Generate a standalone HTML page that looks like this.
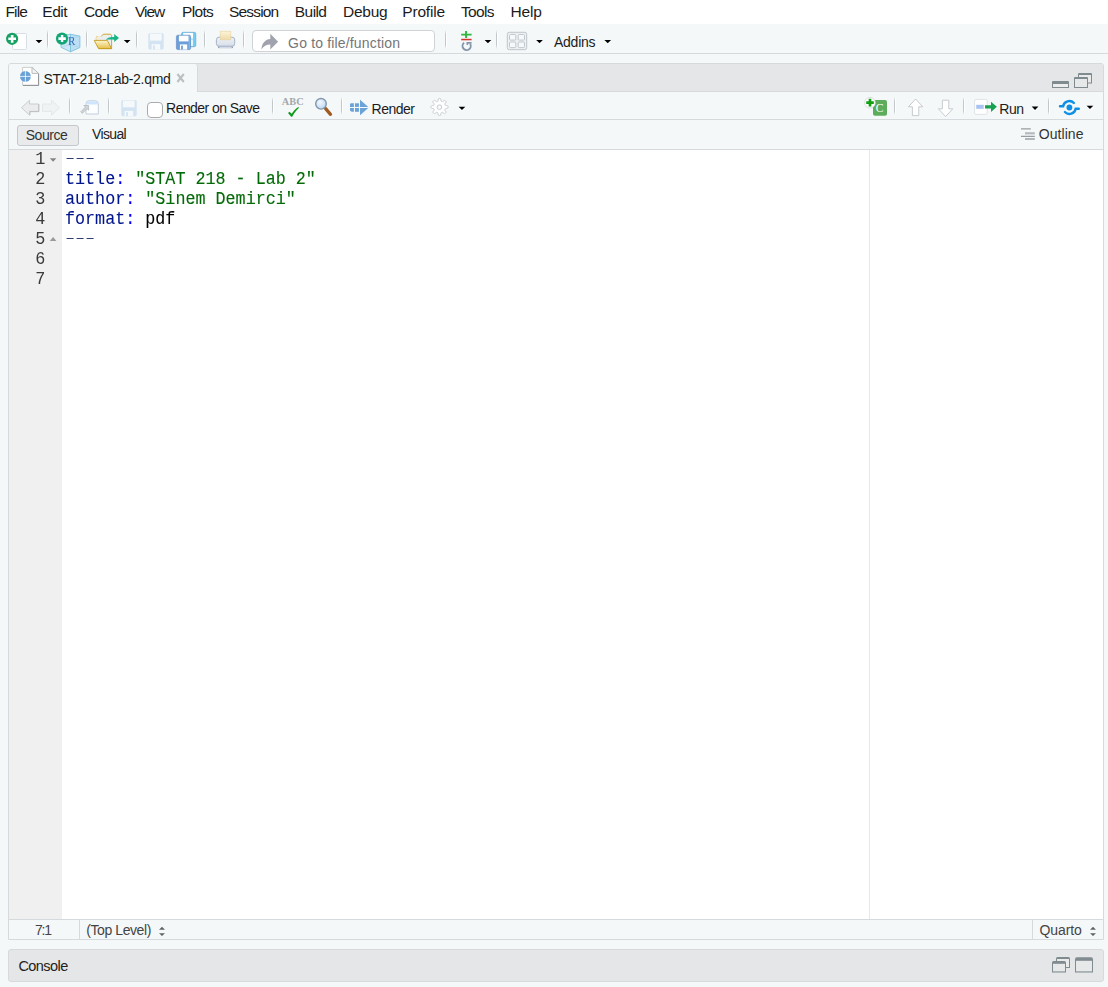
<!DOCTYPE html>
<html><head><meta charset="utf-8"><title>RStudio</title>
<style>
html,body{margin:0;padding:0}
body{width:1108px;height:987px;overflow:hidden;background:#f4f8f9;position:relative;font-family:"Liberation Sans",sans-serif}
div,span,i,svg{position:absolute;box-sizing:border-box}
.t{white-space:nowrap;line-height:1}
.sep{width:2px;background:linear-gradient(to right,#c3c7ca 0,#c3c7ca 1px,#fff 1px,#fff 2px);-webkit-mask-image:linear-gradient(to bottom,transparent 0,#000 22%,#000 78%,transparent 100%);mask-image:linear-gradient(to bottom,transparent 0,#000 22%,#000 78%,transparent 100%)}
.cl{left:65px;height:20px;line-height:20px;font-family:"Liberation Mono",monospace;font-size:16.73px;white-space:pre;color:#000;transform:scaleY(1.09);transform-origin:0 14px;-webkit-text-stroke:0.1px currentColor}
.cl span{position:static;-webkit-text-stroke:0.1px currentColor}
.gn{left:29px;width:16.3px;height:20px;line-height:20px;text-align:right;font-family:"Liberation Mono",monospace;font-size:18.3px;color:#3a3a3a;transform:scaleX(0.92);transform-origin:100% 50%}
.tg{color:#00168e}.kw{color:#0000ff}.st{color:#036a07}.cm{color:#4d4d4d}
</style></head><body>
<!-- menu bar -->
<div style="left:0;top:0;width:1108px;height:24px;background:#fff"></div>
<!-- main toolbar bottom border -->
<div style="left:0;top:53px;width:1108px;height:1px;background:#d6dadc"></div>
<!-- search box -->
<div style="left:252px;top:30px;width:183px;height:22px;background:#fff;border:1px solid #cfd3d6;border-radius:4px"></div>
<!-- source panel -->
<div style="left:8px;top:63px;width:1096px;height:877px;border:1px solid #d6dadc;border-radius:3px 3px 0 0;background:#f4f8f9;overflow:hidden">
  <div style="left:0;top:0;width:1094px;height:28px;background:#e5e6e7;border-bottom:1px solid #d6dadc"></div>
  <div style="left:0;top:0;width:189px;height:28px;background:#f4f8f9;border-right:1px solid #d6dadc;border-radius:0 3px 0 0"></div>
  <div style="left:0;top:55px;width:1094px;height:1px;background:#d6dadc"></div>
  <div style="left:0;top:85px;width:1094px;height:1px;background:#d6dadc"></div>
  <!-- editor -->
  <div style="left:0;top:86px;width:1094px;height:769px;background:#fff"></div>
  <div style="left:0;top:86px;width:53px;height:769px;background:#f0f0f0"></div>
  <div style="left:860px;top:86px;width:1px;height:769px;background:#e8e8e8"></div>
  <!-- status -->
  <div style="left:0;top:855px;width:1094px;height:1px;background:#d6dadc"></div>
  <div style="left:70px;top:856px;width:1px;height:19px;background:#d6dadc"></div>
  <div style="left:1023px;top:856px;width:1px;height:19px;background:#d6dadc"></div>
</div>
<!-- Source button -->
<div style="left:17px;top:125px;width:62px;height:21px;background:#e9eaeb;border:1px solid #c4c8cb;border-radius:3px"></div>
<!-- console panel -->
<div style="left:8px;top:949px;width:1096px;height:33px;border:1px solid #d6dadc;border-radius:3px;background:#e5e6e7"></div>
<i class="sep" style="left:47px;top:30px;height:19px"></i>
<i class="sep" style="left:86px;top:30px;height:19px"></i>
<i class="sep" style="left:136px;top:30px;height:19px"></i>
<i class="sep" style="left:204px;top:30px;height:19px"></i>
<i class="sep" style="left:243px;top:30px;height:19px"></i>
<i class="sep" style="left:445px;top:30px;height:19px"></i>
<i class="sep" style="left:496px;top:30px;height:19px"></i>
<i class="sep" style="left:69px;top:96.5px;height:18.5px"></i>
<i class="sep" style="left:108px;top:96.5px;height:18.5px"></i>
<i class="sep" style="left:272px;top:96.5px;height:18.5px"></i>
<i class="sep" style="left:341px;top:96.5px;height:18.5px"></i>
<i class="sep" style="left:894px;top:96.5px;height:18.5px"></i>
<i class="sep" style="left:963px;top:96.5px;height:18.5px"></i>
<i class="sep" style="left:1048px;top:96.5px;height:18.5px"></i>
<span id="m1" class="t" style="left:5.48px;top:3.75px;font-size:15.5px;color:#1c1c1c;letter-spacing:-0.840px">File</span>
<span id="m2" class="t" style="left:42.34px;top:3.75px;font-size:15.5px;color:#1c1c1c;letter-spacing:-0.480px">Edit</span>
<span id="m3" class="t" style="left:83.98px;top:3.75px;font-size:15.5px;color:#1c1c1c;letter-spacing:-0.660px">Code</span>
<span id="m4" class="t" style="left:134.88px;top:3.75px;font-size:15.5px;color:#1c1c1c;letter-spacing:-0.960px">View</span>
<span id="m5" class="t" style="left:182.10px;top:3.75px;font-size:15.5px;color:#1c1c1c;letter-spacing:-0.675px">Plots</span>
<span id="m6" class="t" style="left:229.10px;top:3.75px;font-size:15.5px;color:#1c1c1c;letter-spacing:-0.840px">Session</span>
<span id="m7" class="t" style="left:294.86px;top:3.75px;font-size:15.5px;color:#1c1c1c;letter-spacing:-0.585px">Build</span>
<span id="m8" class="t" style="left:343.10px;top:3.75px;font-size:15.5px;color:#1c1c1c;letter-spacing:-0.270px">Debug</span>
<span id="m9" class="t" style="left:402.34px;top:3.75px;font-size:15.5px;color:#1c1c1c;letter-spacing:-0.210px">Profile</span>
<span id="m10" class="t" style="left:461.00px;top:3.75px;font-size:15.5px;color:#1c1c1c;letter-spacing:-0.675px">Tools</span>
<span id="m11" class="t" style="left:510.48px;top:3.75px;font-size:15.5px;color:#1c1c1c;letter-spacing:-0.120px">Help</span>
<span id="t1" class="t" style="left:288.12px;top:36.00px;font-size:14px;color:#767676;letter-spacing:0.160px">Go to file/function</span>
<span id="t2" class="t" style="left:554.00px;top:35.00px;font-size:14px;color:#1c1c1c;letter-spacing:-0.252px">Addins</span>
<span id="t3" class="t" style="left:43.48px;top:72.00px;font-size:14px;color:#1c1c1c;letter-spacing:-0.307px">STAT-218-Lab-2.qmd</span>
<span id="t4" class="t" style="left:166.10px;top:101.00px;font-size:14px;color:#1c1c1c;letter-spacing:-0.554px">Render on Save</span>
<span id="t5" class="t" style="left:371.60px;top:102.00px;font-size:14px;color:#1c1c1c;letter-spacing:-0.540px">Render</span>
<span id="t6" class="t" style="left:999.22px;top:102.00px;font-size:14px;color:#1c1c1c;letter-spacing:-0.450px">Run</span>
<span id="t7" class="t" style="left:25.72px;top:128.00px;font-size:14px;color:#333;letter-spacing:-0.468px">Source</span>
<span id="t8" class="t" style="left:92.00px;top:127.00px;font-size:14px;color:#222;letter-spacing:-0.648px">Visual</span>
<span id="t9" class="t" style="left:1038.74px;top:127.00px;font-size:14px;color:#333;letter-spacing:0.060px">Outline</span>
<span id="s1" class="t" style="left:35.00px;top:923.00px;font-size:14px;color:#444;letter-spacing:-1.260px">7:1</span>
<span id="s2" class="t" style="left:86.24px;top:923.00px;font-size:14px;color:#444;letter-spacing:-0.414px">(Top Level)</span>
<span id="s3" class="t" style="left:1039.62px;top:923.00px;font-size:14px;color:#444;letter-spacing:-0.144px">Quarto</span>
<span id="s4" class="t" style="left:18.48px;top:958.75px;font-size:14.5px;color:#222;letter-spacing:-0.570px">Console</span>
<div class="cl" style="top:170px"><span class="tg">title</span><span class="kw">:</span> <span class="st">"STAT 218 - Lab 2"</span></div>
<div class="cl" style="top:190px"><span class="tg">author</span><span class="kw">:</span> <span class="st">"Sinem Demirci"</span></div>
<div class="cl" style="top:210px"><span class="tg">format</span><span class="kw">:</span> pdf</div>
<div class="gn" style="top:148.6px">1</div>
<div class="gn" style="top:168.6px">2</div>
<div class="gn" style="top:188.6px">3</div>
<div class="gn" style="top:208.6px">4</div>
<div class="gn" style="top:228.6px">5</div>
<div class="gn" style="top:248.6px">6</div>
<div class="gn" style="top:268.6px">7</div>
<svg style="left:0;top:0" width="1108" height="987" viewBox="0 0 1108 987">
<defs>
<linearGradient id="gFold" x1="0" y1="0" x2="0" y2="1"><stop offset="0" stop-color="#fdf6d2"/><stop offset="1" stop-color="#e6c04a"/></linearGradient>
<linearGradient id="gPaper" x1="0" y1="0" x2="0" y2="1"><stop offset="0" stop-color="#fdf4d6"/><stop offset="1" stop-color="#eedaaa"/></linearGradient>
<linearGradient id="gPrn" x1="0" y1="0" x2="0" y2="1"><stop offset="0" stop-color="#eff2f7"/><stop offset="1" stop-color="#d8dfea"/></linearGradient>
<radialGradient id="gGlass" cx="0.4" cy="0.35" r="0.7"><stop offset="0" stop-color="#f2f8ff"/><stop offset="1" stop-color="#bcd6f4"/></radialGradient>
</defs>
<!-- ===== main toolbar ===== -->
<g id="newfile">
 <rect x="12.5" y="33.5" width="14" height="16" rx="1" fill="#fff" stroke="#d8dee6"/>
 <circle cx="12.1" cy="38.8" r="6.1" fill="#15a160"/>
 <path d="M8.3 37.5h7.7v2.6h-7.7zM10.85 34.9h2.6v7.8h-2.6z" fill="#fff"/>
</g>
<g transform="translate(35.6 40.0)"><path d="M-0.5 0.9h7.7L3.35 4.5z" fill="#fff" opacity="0.9"/><path d="M0 0h6.7L3.35 3.3z" fill="#000"/></g>
<g id="newproj">
 <path d="M70.5 34.2 L79.9 36.1 L79.9 47.5 L70.5 51.8 L61 47.3 L61 36.2 Z" fill="#cde7f7"/>
 <path d="M70.5 34.2 L79.9 36.1 L79.9 47.5 L70.5 51.8Z" fill="#bcdff4"/>
 <path d="M70.5 34.2 L79.9 36.1 L79.9 47.5 L70.5 51.8 L61 47.3 L61 36.2 Z M70.5 34.2 V51.8" fill="none" stroke="#72bfd8" stroke-width="0.8" stroke-linejoin="round"/>
 <path d="M61 47.3 L70.5 44.6 L79.9 47.5 M61 36.2 L70.5 38.3 L79.9 36.1" fill="none" stroke="#9fd3e6" stroke-width="0.6"/>
 <text x="67.9" y="44.9" font-family="Liberation Serif" font-size="11.8" fill="#2a5cb0" opacity="0.9" textLength="7.3" lengthAdjust="spacingAndGlyphs">R</text>
 <circle cx="62" cy="38.6" r="6.1" fill="#13a674"/>
 <path d="M58.4 37.2h7.4v2.7h-7.4zM60.9 35h2.4v7.1h-2.4z" fill="#fff"/>
</g>
<g id="open">
 <path d="M96.4 40.5 V37.4 q0-0.9 0.9-0.9 H101.1 L103.3 34.2 H110.6 L111.6 35.3 V48.6 H99Z" fill="#eceded" stroke="#c79e26" stroke-width="0.9" stroke-linejoin="round"/>
 <path d="M96.4 40.3 V37.4 q0-0.9 0.9-0.9 H101.1" fill="none" stroke="#f4e9c0" stroke-width="1"/>
 <path d="M94.2 40.4 H107.3 L111.6 48.6 H98.5 Z" fill="url(#gFold)" stroke="#c49a1e" stroke-width="0.9" stroke-linejoin="round"/>
 <path d="M105.9 40 C107 37.6 109.4 36.8 114.2 36.9 V33.9 L119 38.1 L114.2 42 V39.7 C110.4 39.5 108 39.5 105.9 40Z" fill="#18b487"/>
</g>
<g transform="translate(123.8 40.0)"><path d="M-0.5 0.9h7.7L3.35 4.5z" fill="#fff" opacity="0.9"/><path d="M0 0h6.7L3.35 3.3z" fill="#000"/></g>
<g id="save_dis">
 <rect x="148.3" y="33.3" width="15.4" height="16.2" rx="1.6" fill="#d3e3f1"/>
 <rect x="149.9" y="33.8" width="11.8" height="6.8" fill="#f5f9fc"/>
 <rect x="151.6" y="44.2" width="8.6" height="5.3" fill="#f5f9fc"/>
 <rect x="153.1" y="45.5" width="1.8" height="4" fill="#d3e3f1"/>
</g>
<g id="saveall">
 <rect x="181.6" y="32.3" width="14.2" height="14.4" rx="1.5" fill="#72cef2" stroke="#5b9ccc" stroke-width="0.6"/>
 <rect x="183.2" y="32.9" width="9.8" height="5.8" fill="#fff"/>
 <rect x="190.8" y="39.4" width="2.1" height="6.6" fill="#f2fbff"/>
 <rect x="176.4" y="35.2" width="14.2" height="14.4" rx="1.5" fill="#6c9fd8" stroke="#5a88c2" stroke-width="0.6"/>
 <rect x="188.6" y="36" width="1.5" height="13" fill="#86b2e3"/>
 <rect x="178.9" y="35.7" width="9.6" height="5.7" fill="#fff"/>
 <rect x="179.9" y="44.4" width="7.3" height="5.2" fill="#fff"/>
 <rect x="181.1" y="45.6" width="1.8" height="4" fill="#6c9fd8"/>
</g>
<g id="print">
 <rect x="218" y="45" width="15" height="3.5" rx="1.2" fill="#d3dae6"/>
 <path d="M218.7 46.4v1.6M232.3 46.4v1.6" stroke="#8f9cb4" stroke-width="1.3"/>
 <rect x="216.4" y="37.2" width="18.3" height="9" rx="2.6" fill="url(#gPrn)" stroke="#9eabc1" stroke-width="0.9"/>
 <rect x="220.2" y="31.2" width="10.6" height="8.7" fill="url(#gPaper)" stroke="#e6d3a4" stroke-width="0.6"/>
</g>
<g id="goto">
 <path d="M261.4 49.4 C261.9 42.8 265.5 39.2 270.3 38.9 V33.8 L278.1 41.8 L270.3 49.6 V44.6 C266.6 44.5 263.8 45.9 261.4 49.4Z" fill="#a0a3ae"/>
</g>
<g id="git">
 <path d="M461.2 33.7h10.4v1.7h-10.4zM465.1 30.9h2v7h-2z" fill="#2fb741"/>
 <rect x="461.2" y="38.8" width="10.4" height="1.5" fill="#d9342b"/>
 <path d="M464.1 42.8 A4.1 4.1 0 1 0 470.2 44" fill="none" stroke="#8496aa" stroke-width="1.9"/>
 <path d="M467.3 45 V42.9 H471.6" fill="none" stroke="#8496aa" stroke-width="1.6"/>
</g>
<g transform="translate(484.6 40.0)"><path d="M-0.5 0.9h7.7L3.35 4.5z" fill="#fff" opacity="0.9"/><path d="M0 0h6.7L3.35 3.3z" fill="#000"/></g>
<g id="panes">
 <rect x="507.3" y="32.3" width="19.4" height="17.4" rx="2" fill="#eef1f3" stroke="#b9bfc5" stroke-width="0.9"/>
 <rect x="509.5" y="34.5" width="6.3" height="5.6" rx="1" fill="#f6f8f9" stroke="#bcc2c8" stroke-width="0.9"/>
 <rect x="518.2" y="34.5" width="6.3" height="5.6" rx="1" fill="#f6f8f9" stroke="#bcc2c8" stroke-width="0.9"/>
 <rect x="509.5" y="42" width="6.3" height="5.6" rx="1" fill="#f6f8f9" stroke="#bcc2c8" stroke-width="0.9"/>
 <rect x="518.2" y="42" width="6.3" height="5.6" rx="1" fill="#f6f8f9" stroke="#bcc2c8" stroke-width="0.9"/>
</g>
<g transform="translate(536.2 40.0)"><path d="M-0.5 0.9h7.7L3.35 4.5z" fill="#fff" opacity="0.9"/><path d="M0 0h6.7L3.35 3.3z" fill="#000"/></g>
<g transform="translate(604.4 40.0)"><path d="M-0.5 0.9h7.7L3.35 4.5z" fill="#fff" opacity="0.9"/><path d="M0 0h6.7L3.35 3.3z" fill="#000"/></g>
<!-- ===== tab ===== -->
<g id="qmd">
 <path d="M22.6 67.4 H32 L38.5 73.4 V85.3 H22.6Z" fill="#fff" stroke="#c6c8ca" stroke-width="0.9" stroke-linejoin="round"/>
 <path d="M38.6 73.4 V85.4 H23" fill="none" stroke="#8d8f91" stroke-width="1"/>
 <path d="M32 67.4 V73.4 H38.5Z" fill="#f4f4f4" stroke="#b4b6b8" stroke-width="0.9" stroke-linejoin="round"/>
 <circle cx="25.4" cy="76.4" r="5.4" fill="#67a1d8"/>
 <path d="M25.4 71V81.8M20 76.4H30.8" stroke="#eef5fc" stroke-width="0.9"/>
</g>
<path d="M177.4 74L183.8 82M183.8 74L177.4 82" stroke="#bcc0c3" stroke-width="2.1"/>
<!-- panel min / restore -->
<g id="minres" fill="#808b90">
 <path d="M1053 81 h15 q1 0 1 1 V88 H1052 V82 q0-1 1-1z"/><rect x="1053" y="84" width="15" height="3" fill="#eceded"/>
 <path d="M1079 73 h12 q1 0 1 1 V83.5 H1078 V74 q0-1 1-1z"/><rect x="1079" y="75" width="12" height="7.5" fill="#e9eaea"/>
 <path d="M1075 77 h12 q1 0 1 1 V88 H1074 V78 q0-1 1-1z"/><rect x="1075" y="79" width="12" height="8" fill="#e7e8e9"/>
</g>
<!-- ===== doc toolbar ===== -->
<g id="backfwd" stroke-linejoin="round">
 <path d="M21.5 107.7 L29.5 100.3 V104 H38.6 V111.4 H29.5 V115.2Z" fill="#ebecee" stroke="#c6c9cc" stroke-width="0.9"/>
 <path d="M38.9 104.2 V111.7 H30 V115" fill="none" stroke="#b4b7ba" stroke-width="0.7"/>
 <path d="M59.6 107.7 L51.6 100.3 V104 H42.5 V111.4 H51.6 V115.2Z" fill="#f0f3f4" stroke="#e2e5e7" stroke-width="0.9"/>
</g>
<g id="popout">
 <path d="M86 114 V103.8 q0-3 3-3 h6.3 q3 0 3 3 V114z" fill="#fdfeff" stroke="#bccad8" stroke-width="0.9"/>
 <path d="M86.4 104.6 V103.8 q0-2.6 2.6-2.6 h6.3 q2.6 0 2.6 2.6 v0.8z" fill="#cfe5fb"/>
 <path d="M83.8 105.5 H88.6 V110.3 L87 108.7 L82.3 113.4 L80.7 111.8 L85.4 107.1 Z" fill="#d2d5da" stroke="#a2a7ae" stroke-width="0.55" stroke-linejoin="round"/>
</g>
<g id="save_dis2">
 <rect x="121.3" y="100" width="15.4" height="16.2" rx="1.6" fill="#d3e3f1"/>
 <rect x="122.9" y="100.5" width="11.8" height="6.8" fill="#f5f9fc"/>
 <rect x="124.6" y="110.9" width="8.6" height="5.3" fill="#f5f9fc"/>
 <rect x="126.1" y="112.2" width="1.8" height="4" fill="#d3e3f1"/>
</g>
<rect x="147.5" y="102.5" width="15" height="15" rx="3.5" fill="#fff" stroke="#ababab" stroke-width="1"/>
<g id="spell">
 <text x="281.8" y="105.1" font-family="Liberation Serif" font-weight="bold" font-size="10.2" fill="#a3a7ab" textLength="21.8" lengthAdjust="spacingAndGlyphs">ABC</text>
 <path d="M288 113 L289.5 111.7 L291.6 113.8 C293.4 111 295.6 108.8 298.2 106.9 L299 107.7 C296.2 110.4 294 113.4 292.2 116.8 L291.2 116.8 Z" fill="#0f9a1c"/>
</g>
<g id="find">
 <path d="M325.6 108.6 L330.5 114.3" stroke="#a05c20" stroke-width="3.3" stroke-linecap="round"/>
 <circle cx="321" cy="103.8" r="5.3" fill="url(#gGlass)" stroke="#8296ad" stroke-width="1.4"/>
</g>
<g id="render" fill="#6ba2d8">
 <path d="M351.2 103.3 H353.9 V106.9 H350 V104.5 Q350 103.3 351.2 103.3Z"/>
 <rect x="355" y="103.3" width="3.95" height="3.6"/>
 <path d="M350 108 H353.9 V111.8 H351.6 L350 110.6Z"/>
 <rect x="355" y="108" width="3.95" height="3.8"/>
 <path d="M360 99.8 L368.3 106.9 H360Z"/>
 <path d="M360 108 H368.3 L360 115.3Z"/>
</g>
<g id="gear">
 <path fill="#fff" stroke="#c3c6c9" stroke-width="0.9" stroke-linejoin="round" d="M448.07 107.00 L448.04 107.42 L447.94 107.83 L447.59 108.20 L446.61 108.41 L445.63 108.54 L445.26 108.75 L445.10 109.00 L444.98 109.27 L444.87 109.54 L444.80 109.84 L444.92 110.25 L445.53 111.03 L446.07 111.87 L446.06 112.38 L445.84 112.74 L445.56 113.06 L445.24 113.34 L444.88 113.56 L444.37 113.57 L443.53 113.03 L442.75 112.42 L442.34 112.30 L442.04 112.37 L441.77 112.48 L441.50 112.60 L441.25 112.76 L441.04 113.13 L440.91 114.11 L440.70 115.09 L440.33 115.44 L439.92 115.54 L439.50 115.57 L439.08 115.54 L438.67 115.44 L438.30 115.09 L438.09 114.11 L437.96 113.13 L437.75 112.76 L437.50 112.60 L437.23 112.48 L436.96 112.37 L436.66 112.30 L436.25 112.42 L435.47 113.03 L434.63 113.57 L434.12 113.56 L433.76 113.34 L433.44 113.06 L433.16 112.74 L432.94 112.38 L432.93 111.87 L433.47 111.03 L434.08 110.25 L434.20 109.84 L434.13 109.54 L434.02 109.27 L433.90 109.00 L433.74 108.75 L433.37 108.54 L432.39 108.41 L431.41 108.20 L431.06 107.83 L430.96 107.42 L430.93 107.00 L430.96 106.58 L431.06 106.17 L431.41 105.80 L432.39 105.59 L433.37 105.46 L433.74 105.25 L433.90 105.00 L434.02 104.73 L434.13 104.46 L434.20 104.16 L434.08 103.75 L433.47 102.97 L432.93 102.13 L432.94 101.62 L433.16 101.26 L433.44 100.94 L433.76 100.66 L434.12 100.44 L434.63 100.43 L435.47 100.97 L436.25 101.58 L436.66 101.70 L436.96 101.63 L437.23 101.52 L437.50 101.40 L437.75 101.24 L437.96 100.87 L438.09 99.89 L438.30 98.91 L438.67 98.56 L439.08 98.46 L439.50 98.43 L439.92 98.46 L440.33 98.56 L440.70 98.91 L440.91 99.89 L441.04 100.87 L441.25 101.24 L441.50 101.40 L441.77 101.52 L442.04 101.63 L442.34 101.70 L442.75 101.58 L443.53 100.97 L444.37 100.43 L444.88 100.44 L445.24 100.66 L445.56 100.94 L445.84 101.26 L446.06 101.62 L446.07 102.13 L445.53 102.97 L444.92 103.75 L444.80 104.16 L444.87 104.46 L444.98 104.73 L445.10 105.00 L445.26 105.25 L445.63 105.46 L446.61 105.59 L447.59 105.80 L447.94 106.17 L448.04 106.58Z"/>
 <circle cx="439.4" cy="107.2" r="2.3" fill="#f7f9fa" stroke="#c3c6c9" stroke-width="0.9"/>
</g>
<g transform="translate(458.6 106.8)"><path d="M-0.5 0.9h7.7L3.35 4.5z" fill="#fff" opacity="0.9"/><path d="M0 0h6.7L3.35 3.3z" fill="#000"/></g>
<g id="chunk">
 <rect x="873" y="100" width="14" height="15.8" rx="2" fill="#5cac5c"/>
 <text x="875.7" y="111.7" font-family="Liberation Serif" font-size="11.6" fill="#fff">C</text>
 <circle cx="870" cy="102.7" r="5.3" fill="#fff" stroke="#d2d5d8" stroke-width="0.8"/>
 <path d="M866.2 101.3h7.6v2.7h-7.6zM868.65 98.85h2.7v7.6h-2.7z" fill="#12a012"/>
</g>
<g id="updown" fill="#fff" stroke="#c2c5c8" stroke-width="0.9" stroke-linejoin="round">
 <path d="M915.6 99 L922.8 106.8 H918.8 V115.6 H912.4 V106.8 H908.4Z"/>
 <path d="M945.6 116.6 L952.8 108.8 H948.8 V100.2 H942.4 V108.8 H938.4Z"/>
</g>
<g id="run">
 <rect x="974.6" y="99.4" width="12.6" height="15" rx="1.5" fill="#fff" stroke="#d9dde0" stroke-width="0.8"/>
 <rect x="976.2" y="104.8" width="7.5" height="4" fill="#a9c4f0"/>
 <path d="M985 105.2 H991 V101.7 L996.9 106.85 L991 112 V108.5 H985Z" fill="#17a150"/>
</g>
<g transform="translate(1031.7 106.6)"><path d="M-0.5 0.9h7.7L3.35 4.5z" fill="#fff" opacity="0.9"/><path d="M0 0h6.7L3.35 3.3z" fill="#000"/></g>
<g id="publish" fill="none" stroke="#0d8fe6" stroke-width="2.4">
 <path d="M1060 106.3 H1063.1 A6.4 6.4 0 0 1 1073.9 103.0" stroke-linecap="round"/>
 <path d="M1078.8 108.7 H1075.7 A6.4 6.4 0 0 1 1064.9 112.0" stroke-linecap="round"/>
 <circle cx="1069.4" cy="107.5" r="2.9" fill="#0d8fe6" stroke="none"/>
</g>
<g transform="translate(1086.6 105.7)"><path d="M-0.5 0.9h7.7L3.35 4.5z" fill="#fff" opacity="0.9"/><path d="M0 0h6.7L3.35 3.3z" fill="#000"/></g>
<g id="outline">
 <path d="M1021 128.9H1030.8" stroke="#80888d" stroke-width="1"/>
 <path d="M1025 133.3H1034.8" stroke="#b4b9bd" stroke-width="2.2"/>
 <path d="M1021 136.3H1034.8" stroke="#80888d" stroke-width="1"/>
 <path d="M1025 139H1034.8" stroke="#b0b5b9" stroke-width="2"/>
</g>
<!-- yaml dashes -->
<path d="M66.6 158.5h7M76.6 158.5h7M86.6 158.5h7M66.6 238.5h7M76.6 238.5h7M86.6 238.5h7" stroke="#2f4070" stroke-width="1"/>
<!-- gutter fold widgets -->
<path d="M49.8 158.2h6.6l-3.3 3.6z" fill="#858585"/>
<path d="M49.8 241h6.6l-3.3-4z" fill="#9a9a9a"/>
<!-- status arrows -->
<path d="M158.4 930.2h7.2l-3.6-4zM158.4 932.8h7.2l-3.6 3.7z" fill="#fff" opacity="0.8"/><path d="M159 929.8h6l-3-3.1zM159 933.2h6l-3 2.8z" fill="#5e6266"/>
<path d="M1089.4 930.2h7.2l-3.6-4zM1089.4 932.8h7.2l-3.6 3.7z" fill="#fff" opacity="0.8"/><path d="M1090 929.8h6l-3-3.1zM1090 933.2h6l-3 2.8z" fill="#5e6266"/>
<!-- console icons -->
<g id="conic" fill="#808b90">
 <path d="M1057.5 957 h11 q1.5 0 1.5 1.5 V968 H1056 V958.5 q0-1.5 1.5-1.5z"/><rect x="1057" y="959" width="12" height="8" fill="#e9eaea"/>
 <path d="M1053.5 961 h11 q1.5 0 1.5 1.5 V972.6 H1052 V962.5 q0-1.5 1.5-1.5z"/><rect x="1053" y="963.8" width="12" height="7.6" fill="#e7e8e9"/>
 <path d="M1077 957.2 h14 q2 0 2 2 V972.6 H1075 V959.2 q0-2 2-2z"/><rect x="1076" y="960.8" width="16" height="10.6" fill="#e7e8e9"/>
</g>
</svg>

</body></html>
